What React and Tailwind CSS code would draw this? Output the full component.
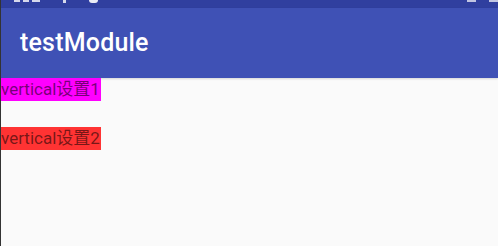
import React from "react";

// status bar: only the bottom edge of its glyphs is in frame
function StatusBar() {
  return (
    <div className="h-[8px] bg-[#303f9f] flex items-start justify-between pl-[13px]">
      <div className="flex items-start">
        <div className="flex gap-[3px]">
          <div className="h-[2px] w-[6px] bg-white/80" />
          <div className="h-[2px] w-[6px] bg-white/80" />
          <div className="h-[2px] w-[8px] bg-white/80" />
        </div>
        <div className="ml-[23px] h-[3px] w-[3px] bg-white/80" />
        <div className="ml-[23px] h-[3px] w-[9px] rounded-b bg-white/90" />
      </div>
      <div className="flex gap-[13px]">
        <div className="h-[2px] w-[9px] bg-white/70" />
        <div className="h-[2px] w-[9px] bg-white/70" />
      </div>
    </div>
  );
}

export default function App() {
  return (
    <div
      className="w-[498px] h-[246px] overflow-hidden bg-[#fafafa] border-l border-[#333333] flex flex-col"
      style={{ fontFamily: "Roboto, 'Noto Sans CJK SC', sans-serif" }}
    >
      <StatusBar />
      <div className="h-[70px] bg-[#3f51b5] flex items-center pl-[19px] pb-[1px] shadow-[0_1px_2px_rgba(0,0,0,0.15)]">
        <span className="text-white text-[25px] font-medium tracking-[0.2px]">testModule</span>
      </div>

      <div className="flex flex-col items-start">
        <div className="h-[23px] leading-[23px] text-[17px] bg-[#ff00ff] text-black/55 pr-[1px]">
          vertical设置1
        </div>
        <div className="mt-[26px] h-[23px] leading-[23px] text-[17px] bg-[#ff3333] text-black/55 pr-[1px]">
          vertical设置2
        </div>
      </div>
    </div>
  );
}
